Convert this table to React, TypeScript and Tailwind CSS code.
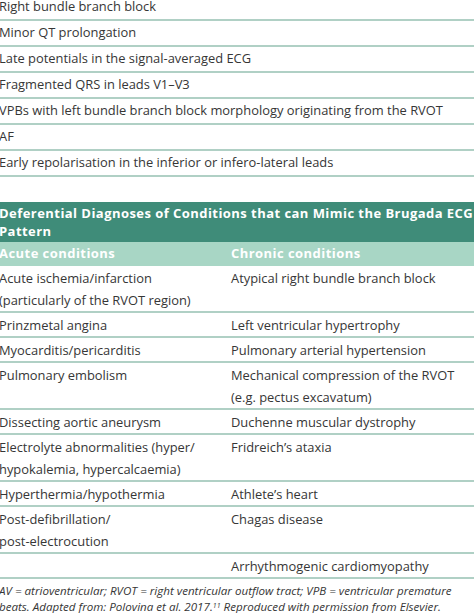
const features = [
  "Right bundle branch block",
  "Minor QT prolongation",
  "Late potentials in the signal-averaged ECG",
  "Fragmented QRS in leads V1–V3",
  "VPBs with left bundle branch block morphology originating from the RVOT",
  "AF",
  "Early repolarisation in the inferior or infero-lateral leads",
];

const diagnoses: [string[], string[]][] = [
  [["Acute ischemia/infarction", "(particularly of the RVOT region)"], ["Atypical right bundle branch block"]],
  [["Prinzmetal angina"], ["Left ventricular hypertrophy"]],
  [["Myocarditis/pericarditis"], ["Pulmonary arterial hypertension"]],
  [["Pulmonary embolism"], ["Mechanical compression of the RVOT", "(e.g. pectus excavatum)"]],
  [["Dissecting aortic aneurysm"], ["Duchenne muscular dystrophy"]],
  [["Electrolyte abnormalities (hyper/", "hypokalemia, hypercalcaemia)"], ["Fridreich’s ataxia"]],
  [["Hyperthermia/hypothermia"], ["Athlete’s heart"]],
  [["Post-defibrillation/", "post-electrocution"], ["Chagas disease"]],
  [[], ["Arrhythmogenic cardiomyopathy"]],
];

function Cell({ lines }: { lines: string[] }) {
  return (
    <div className="pt-[1px]">
      {lines.map((l) => (
        <div key={l} className="leading-[22px] whitespace-nowrap">
          {l}
        </div>
      ))}
      {lines.length === 0 && <div className="leading-[22px]">&nbsp;</div>}
    </div>
  );
}

export default function App() {
  return (
    <div
      className="w-[474px] h-[613px] overflow-hidden bg-white text-[#363636] text-[12.9px]"
      style={{ fontFamily: '"Open Sans", "Liberation Sans", sans-serif' }}
    >
      <div className="-mt-[5px] -ml-[1px]">
        {features.map((f) => (
          <div key={f} className="h-[26px] flex items-center border-b-2 border-[#b0d0c5] whitespace-nowrap">
            {f}
          </div>
        ))}
      </div>

      <div className="mt-[25px] bg-[#3f8c79] text-white font-bold text-[13px] leading-[18px] py-[2px] -ml-[1px] tracking-[0.45px]">
        <div className="whitespace-nowrap">Deferential Diagnoses of Conditions that can Mimic the Brugada ECG</div>
        <div>Pattern</div>
      </div>

      <div className="grid grid-cols-[232px_1fr] h-[24px] items-center bg-[#a8d6c5] text-white font-bold text-[13px] -ml-[1px] tracking-[0.45px]">
        <div>Acute conditions</div>
        <div>Chronic conditions</div>
      </div>

      <div className="-ml-[1px]">
        {diagnoses.map(([a, c], i) => (
          <div key={i} className="grid grid-cols-[232px_1fr] border-b-2 border-[#b0d0c5]">
            <Cell lines={a} />
            <Cell lines={c} />
          </div>
        ))}
      </div>

      <p className="pt-[4px] italic text-[11.6px] leading-[16px] text-[#363636] -ml-[1px]">
        AV = atrioventricular; RVOT = right ventricular outflow tract; VPB = ventricular premature beats. Adapted from:
        Polovina et al. 2017.<sup className="text-[7px]">11</sup> Reproduced with permission from Elsevier.
      </p>
    </div>
  );
}
